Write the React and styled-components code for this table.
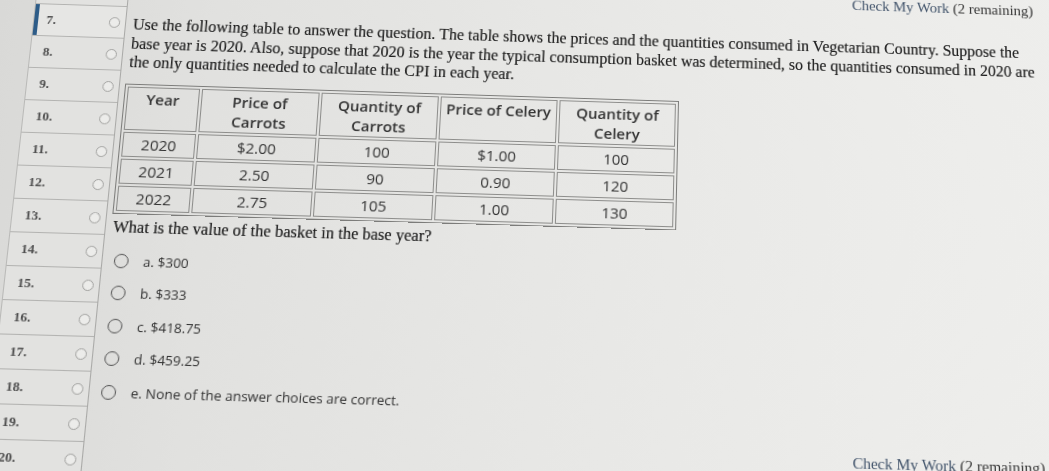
import React, { useLayoutEffect, useRef, useState } from 'react';
import styled, { createGlobalStyle } from 'styled-components';

const GlobalStyle = createGlobalStyle`
  html, body {
    margin: 0;
    padding: 0;
    width: 1049px;
    height: 471px;
    overflow: hidden;
    background: #dcdcda;
  }
  #root {
    width: 1049px;
    height: 471px;
    overflow: hidden;
  }
`;

/* pairs: [layoutX, layoutY, photoX, photoY, weight] */
function fitHomography(pairs) {
  const s = 1000;
  const M = Array.from({ length: 8 }, () => new Array(8).fill(0));
  const r = new Array(8).fill(0);
  const add = (row, val, w) => {
    for (let i = 0; i < 8; i++) {
      for (let j = 0; j < 8; j++) M[i][j] += w * row[i] * row[j];
      r[i] += w * row[i] * val;
    }
  };
  pairs.forEach(([x0, y0, u0, v0, w = 1]) => {
    const x = x0 / s, y = y0 / s, u = u0 / s, v = v0 / s;
    add([x, y, 1, 0, 0, 0, -u * x, -u * y], u, w);
    add([0, 0, 0, x, y, 1, -v * x, -v * y], v, w);
  });
  const n = 8;
  const A = M.map((row, i) => [...row, r[i]]);
  for (let c = 0; c < n; c++) {
    let p = c;
    for (let i = c + 1; i < n; i++) if (Math.abs(A[i][c]) > Math.abs(A[p][c])) p = i;
    [A[c], A[p]] = [A[p], A[c]];
    for (let i = 0; i < n; i++) {
      if (i === c) continue;
      const f = A[i][c] / A[c][c];
      for (let j = c; j <= n; j++) A[i][j] -= f * A[c][j];
    }
  }
  const h = A.map((row, i) => row[n] / row[i]);
  return [h[0], h[1], h[2] * s, h[3], h[4], h[5] * s, h[6] / s, h[7] / s];
}

const toCamera = (H) =>
  `matrix3d(${H[0]}, ${H[3]}, 0, ${H[6]}, ${H[1]}, ${H[4]}, 0, ${H[7]}, 0, 0, 1, 0, ${H[2]}, ${H[5]}, 0, 1)`;

const serif = `"Liberation Serif", "Times New Roman", serif`;
const sans = `"Open Sans", "Noto Sans", Arial, sans-serif`;

const Page = styled.div`
  position: relative;
  width: 1100px;
  height: 540px;
  box-sizing: border-box;
  padding-top: 12px;
  transform-origin: 0 0;
  display: grid;
  grid-template-columns: 128px 1fr;
  align-items: start;
  background: linear-gradient(90deg, #d9d9d7 0%, #e1e1df 20%, #e7e7e5 50%, #ececea 80%, #eeeeec 100%);
  font-family: ${serif};
`;

const Sidebar = styled.div`
  margin-left: 36px;
  width: 92px;
  box-sizing: border-box;
  padding-top: 32px;
  border-left: 1px solid #b9b9b7;
  border-right: 1px solid #a9a9a7;
  background: #e2e2e0;
  display: flex;
  flex-direction: column;
`;

const NavRow = styled.div`
  height: 33px;
  box-sizing: border-box;
  border-top: 1px solid #b3b3b1;
  display: flex;
  align-items: center;
  justify-content: space-between;
  padding: 0 5px 0 12px;
  background: ${(p) => (p.$active ? '#e6e6e4' : '#e2e2e0')};
  box-shadow: ${(p) => (p.$active ? 'inset 4px 0 0 #2d5c88' : 'none')};
`;

const NavNum = styled.span`
  font-family: ${serif};
  font-weight: 700;
  font-size: 13px;
  color: #4e4e4e;
`;

const NavDot = styled.span`
  width: 11px;
  height: 11px;
  box-sizing: border-box;
  border-radius: 50%;
  border: 1.6px solid #a2a2a0;
  background: #ececea;
`;

const Content = styled.div`
  padding-left: 7px;
  padding-right: 80px;
  display: flex;
  flex-direction: column;
  align-items: flex-start;
`;

const CheckBar = styled.div`
  align-self: stretch;
  display: flex;
  justify-content: flex-end;
  height: 20px;
  line-height: 20px;
  font-size: 15px;
  white-space: nowrap;
  margin-top: ${(p) => p.$top}px;
`;

const CheckText = styled.span`
  color: #353535;
`;

const CheckLink = styled.span`
  color: #42546b;
`;

const Question = styled.p`
  margin: ${(p) => p.$gap}px 0 0;
  font-size: 16px;
  line-height: 19.5px;
  color: #1f1f1f;
  white-space: nowrap;
  text-shadow: 0 0 0.4px rgba(0, 0, 0, 0.45);
`;

const DataTable = styled.div`
  margin: 12px 0 0 -2px;
  display: grid;
  grid-template-columns: 71px repeat(4, 116px);
  grid-template-rows: 44px repeat(3, 25px);
  gap: 2px;
  padding: 2px;
  border: 1px solid #7c7c7a;
  font-family: ${sans};
  font-size: 15px;
  color: #333;
`;

const HeadCell = styled.div`
  border: 1px solid #8d8d8b;
  text-align: center;
  font-weight: 600;
  line-height: 20px;
  padding-top: 1px;
`;

const Cell = styled.div`
  border: 1px solid #8d8d8b;
  display: flex;
  align-items: center;
  justify-content: center;
  line-height: 20px;
`;

const Prompt = styled.p`
  margin: 3px 0 0;
  font-size: 16px;
  line-height: 19.5px;
  color: #1f1f1f;
  white-space: nowrap;
  text-shadow: 0 0 0.4px rgba(0, 0, 0, 0.45);
`;

const Options = styled.div`
  margin-top: 8px;
  display: flex;
  flex-direction: column;
`;

const Option = styled.label`
  height: 31.5px;
  display: flex;
  align-items: center;
  gap: 14px;
  padding-left: 4px;
  font-family: ${sans};
  font-size: 13px;
  color: #333;
  white-space: nowrap;
`;

const Radio = styled.span`
  width: 14px;
  height: 14px;
  box-sizing: border-box;
  border-radius: 50%;
  border: 1.6px solid #555;
`;

const rows = [
  ['2020', '$2.00', '100', '$1.00', '100'],
  ['2021', '2.50', '90', '0.90', '120'],
  ['2022', '2.75', '105', '1.00', '130'],
];

const heads = [
  ['Year'],
  ['Price of', 'Carrots'],
  ['Quantity of', 'Carrots'],
  ['Price of Celery'],
  ['Quantity of', 'Celery'],
];

const choices = [
  'a. $300',
  'b. $333',
  'c. $418.75',
  'd. $459.25',
  'e. None of the answer choices are correct.',
];

const navItems = [7, 8, 9, 10, 11, 12, 13, 14, 15, 16, 17, 18, 19, 20];

function CheckMyWork({ top, textRef }) {
  return (
    <CheckBar $top={top}>
      <CheckText ref={textRef}>
        <CheckLink>Check My Work</CheckLink> (2 remaining)
      </CheckText>
    </CheckBar>
  );
}

export default function App() {
  const pageRef = useRef(null);
  const nodes = useRef({});
  const reg = (key) => (el) => {
    nodes.current[key] = el;
  };
  const [camera, setCamera] = useState('none');

  useLayoutEffect(() => {
    const page = pageRef.current;
    const box = (key) => {
      const el = nodes.current[key];
      let x = 0;
      let y = 0;
      let e = el;
      while (e && e !== page) {
        x += e.offsetLeft;
        y += e.offsetTop;
        e = e.offsetParent;
      }
      const w = el.offsetWidth;
      const h = el.offsetHeight;
      return { x, y, w, h, r: x + w, b: y + h, cx: x + w / 2, cy: y + h / 2, xc: y + 0.6 * h };
    };
    const sb = box('sidebar');
    const r7 = box('row7');
    const r13 = box('row13');
    const r19 = box('row19');
    const r20 = box('row20');
    const tb = box('table');
    const ra = box('radio0');
    const re = box('radio4');
    const tc = box('topCheck');
    const l1 = box('line1');
    const l2 = box('line2');
    const pr = box('prompt');
    const lc = box('choice4');
    const bc = box('bottomCheck');
    const right = sb.r - 0.5;
    const left = sb.x + 0.5;
    const pairs = [
      [right, r7.y, 127, 5, 2],
      [left, r7.y, 36.5, 2, 2],
      [right, r13.y, 107, 200, 2],
      [left, r13.y, 15, 197.5, 2],
      [right, r19.y, 87, 406, 2],
      [right, r20.y, 84.5, 442.5, 3],
      [right, r20.b, 82, 478, 1],
      [tb.x, tb.y, 125, 82, 2],
      [tb.r, tb.y, 674, 103, 2],
      [tb.x, tb.b, 113, 213, 2],
      [tb.r, tb.b, 674, 231.5, 2],
      [ra.cx, ra.cy, 120.7, 263],
      [re.cx, re.cy, 107.7, 396],
      [tc.r, tc.xc, 1023, 9],
      [l1.x, l1.xc, 133, 24],
      [l1.r, l1.xc, 1024, 58.5],
      [l2.r, l2.xc, 1046, 79.5],
      [pr.x, pr.xc, 113, 228.5],
      [pr.r, pr.xc, 441, 237],
      [lc.r, lc.xc, 393, 400],
      [bc.r, bc.xc, 1046, 461],
    ];
    setCamera(toCamera(fitHomography(pairs)));
  }, []);

  return (
    <>
      <GlobalStyle />
      <Page ref={pageRef} style={{ transform: camera }}>
        <Sidebar ref={reg('sidebar')}>
          {navItems.map((n) => (
            <NavRow key={n} ref={reg(`row${n}`)} $active={n === 7}>
              <NavNum>{n}.</NavNum>
              <NavDot />
            </NavRow>
          ))}
        </Sidebar>
        <Content>
          <CheckMyWork top={-4} textRef={reg('topCheck')} />
          <Question $gap={25}>
            <span ref={reg('line1')}>
              Use the following table to answer the question. The table shows the prices and the quantities consumed in Vegetarian Country. Suppose the
            </span>
            <br />
            <span ref={reg('line2')}>
              base year is 2020. Also, suppose that 2020 is the year the typical consumption basket was determined, so the quantities consumed in 2020 are
            </span>
            <br />
            <span>the only quantities needed to calculate the CPI in each year.</span>
          </Question>
          <DataTable ref={reg('table')}>
            {heads.map((h, i) => (
              <HeadCell key={i}>
                {h.map((line, j) => (
                  <div key={j}>{line}</div>
                ))}
              </HeadCell>
            ))}
            {rows.map((r) => r.map((c, j) => <Cell key={r[0] + j}>{c}</Cell>))}
          </DataTable>
          <Prompt>
            <span ref={reg('prompt')}>What is the value of the basket in the base year?</span>
          </Prompt>
          <Options>
            {choices.map((c, i) => (
              <Option key={c}>
                <Radio ref={reg(`radio${i}`)} />
                <span ref={reg(`choice${i}`)}>{c}</span>
              </Option>
            ))}
          </Options>
          <CheckMyWork top={22} textRef={reg('bottomCheck')} />
        </Content>
      </Page>
    </>
  );
}
